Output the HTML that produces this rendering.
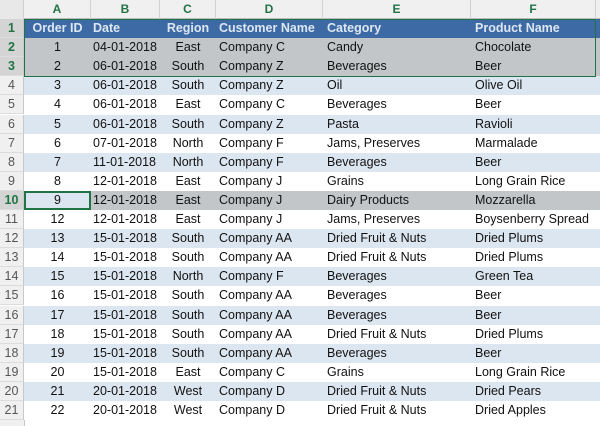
<!DOCTYPE html>
<html><head><style>
body{margin:0;width:600px;height:426px;overflow:hidden;background:#fff;font-family:"Liberation Sans",sans-serif;font-size:12.5px;color:#111}
.r{position:absolute;left:0;width:600px;height:19.1px;display:flex;line-height:19px}
.r div{box-sizing:border-box;height:19.1px;white-space:nowrap;overflow:hidden}
.h{width:24px;text-align:center;background:#f0f0f0;color:#555;border-right:1px solid #c8c8c8;border-bottom:1px solid #dcdcdc}
.a{width:67px;text-align:center}.b{width:69px;padding-left:2px}.c{width:56px;text-align:center}.d{width:107px;padding-left:3px}.e{width:148px;padding-left:4px}.f{width:125px;padding-left:4px}
.o{background:#dce6f1}.w{background:#fff}.s{background:#c3c6c9}
.t{background:#3d6aa5;color:#dde7f2;font-weight:bold}
.sh{background:#d4d4d4;color:#217346;font-weight:bold}
.col{position:absolute;top:0;left:0;width:600px;height:19px;background:#f0f0f0;display:flex;border-bottom:1px solid #bbb;box-sizing:border-box}
.col div{box-sizing:border-box;height:19px;line-height:19px;text-align:center;color:#217346;font-weight:bold;border-right:1px solid #d0d0d0;font-size:12px}
</style></head><body>
<div class="col"><div style="width:24px;background:#e8e8e8"></div><div style="width:67px">A</div><div style="width:69px">B</div><div style="width:56px">C</div><div style="width:107px">D</div><div style="width:148px">E</div><div style="width:125px">F</div></div>

<div class="r t" style="top:19px"><div class="h sh">1</div><div class="a">Order ID</div><div class="b">Date</div><div class="c">Region</div><div class="d">Customer Name</div><div class="e">Category</div><div class="f">Product Name</div></div>
<div class="r s" style="top:38.1px"><div class="h sh">2</div><div class="a">1</div><div class="b">04-01-2018</div><div class="c">East</div><div class="d">Company C</div><div class="e">Candy</div><div class="f">Chocolate</div></div>
<div class="r s" style="top:57.2px"><div class="h sh">3</div><div class="a">2</div><div class="b">06-01-2018</div><div class="c">South</div><div class="d">Company Z</div><div class="e">Beverages</div><div class="f">Beer</div></div>
<div class="r o" style="top:76.3px"><div class="h">4</div><div class="a">3</div><div class="b">06-01-2018</div><div class="c">South</div><div class="d">Company Z</div><div class="e">Oil</div><div class="f">Olive Oil</div></div>
<div class="r w" style="top:95.4px"><div class="h">5</div><div class="a">4</div><div class="b">06-01-2018</div><div class="c">East</div><div class="d">Company C</div><div class="e">Beverages</div><div class="f">Beer</div></div>
<div class="r o" style="top:114.5px"><div class="h">6</div><div class="a">5</div><div class="b">06-01-2018</div><div class="c">South</div><div class="d">Company Z</div><div class="e">Pasta</div><div class="f">Ravioli</div></div>
<div class="r w" style="top:133.6px"><div class="h">7</div><div class="a">6</div><div class="b">07-01-2018</div><div class="c">North</div><div class="d">Company F</div><div class="e">Jams, Preserves</div><div class="f">Marmalade</div></div>
<div class="r o" style="top:152.7px"><div class="h">8</div><div class="a">7</div><div class="b">11-01-2018</div><div class="c">North</div><div class="d">Company F</div><div class="e">Beverages</div><div class="f">Beer</div></div>
<div class="r w" style="top:171.8px"><div class="h">9</div><div class="a">8</div><div class="b">12-01-2018</div><div class="c">East</div><div class="d">Company J</div><div class="e">Grains</div><div class="f">Long Grain Rice</div></div>
<div class="r s" style="top:190.9px"><div class="h sh">10</div><div class="a" style="background:#dce6f1;border:2px solid #217346;line-height:15px">9</div><div class="b">12-01-2018</div><div class="c">East</div><div class="d">Company J</div><div class="e">Dairy Products</div><div class="f">Mozzarella</div></div>
<div class="r w" style="top:210px"><div class="h">11</div><div class="a">12</div><div class="b">12-01-2018</div><div class="c">East</div><div class="d">Company J</div><div class="e">Jams, Preserves</div><div class="f">Boysenberry Spread</div></div>
<div class="r o" style="top:229.1px"><div class="h">12</div><div class="a">13</div><div class="b">15-01-2018</div><div class="c">South</div><div class="d">Company AA</div><div class="e">Dried Fruit &amp; Nuts</div><div class="f">Dried Plums</div></div>
<div class="r w" style="top:248.2px"><div class="h">13</div><div class="a">14</div><div class="b">15-01-2018</div><div class="c">South</div><div class="d">Company AA</div><div class="e">Dried Fruit &amp; Nuts</div><div class="f">Dried Plums</div></div>
<div class="r o" style="top:267.3px"><div class="h">14</div><div class="a">15</div><div class="b">15-01-2018</div><div class="c">North</div><div class="d">Company F</div><div class="e">Beverages</div><div class="f">Green Tea</div></div>
<div class="r w" style="top:286.4px"><div class="h">15</div><div class="a">16</div><div class="b">15-01-2018</div><div class="c">South</div><div class="d">Company AA</div><div class="e">Beverages</div><div class="f">Beer</div></div>
<div class="r o" style="top:305.5px"><div class="h">16</div><div class="a">17</div><div class="b">15-01-2018</div><div class="c">South</div><div class="d">Company AA</div><div class="e">Beverages</div><div class="f">Beer</div></div>
<div class="r w" style="top:324.6px"><div class="h">17</div><div class="a">18</div><div class="b">15-01-2018</div><div class="c">South</div><div class="d">Company AA</div><div class="e">Dried Fruit &amp; Nuts</div><div class="f">Dried Plums</div></div>
<div class="r o" style="top:343.7px"><div class="h">18</div><div class="a">19</div><div class="b">15-01-2018</div><div class="c">South</div><div class="d">Company AA</div><div class="e">Beverages</div><div class="f">Beer</div></div>
<div class="r w" style="top:362.8px"><div class="h">19</div><div class="a">20</div><div class="b">15-01-2018</div><div class="c">East</div><div class="d">Company C</div><div class="e">Grains</div><div class="f">Long Grain Rice</div></div>
<div class="r o" style="top:381.9px"><div class="h">20</div><div class="a">21</div><div class="b">20-01-2018</div><div class="c">West</div><div class="d">Company D</div><div class="e">Dried Fruit &amp; Nuts</div><div class="f">Dried Pears</div></div>
<div class="r w" style="top:401px"><div class="h">21</div><div class="a">22</div><div class="b">20-01-2018</div><div class="c">West</div><div class="d">Company D</div><div class="e">Dried Fruit &amp; Nuts</div><div class="f">Dried Apples</div></div>
<div style="position:absolute;top:420px;left:0;width:24px;height:6px;background:#f0f0f0;border-right:1px solid #c8c8c8"></div>
<div style="position:absolute;left:24px;top:19px;width:572px;height:57.5px;border:1.5px solid #217346;box-sizing:border-box"></div>
</body></html>
